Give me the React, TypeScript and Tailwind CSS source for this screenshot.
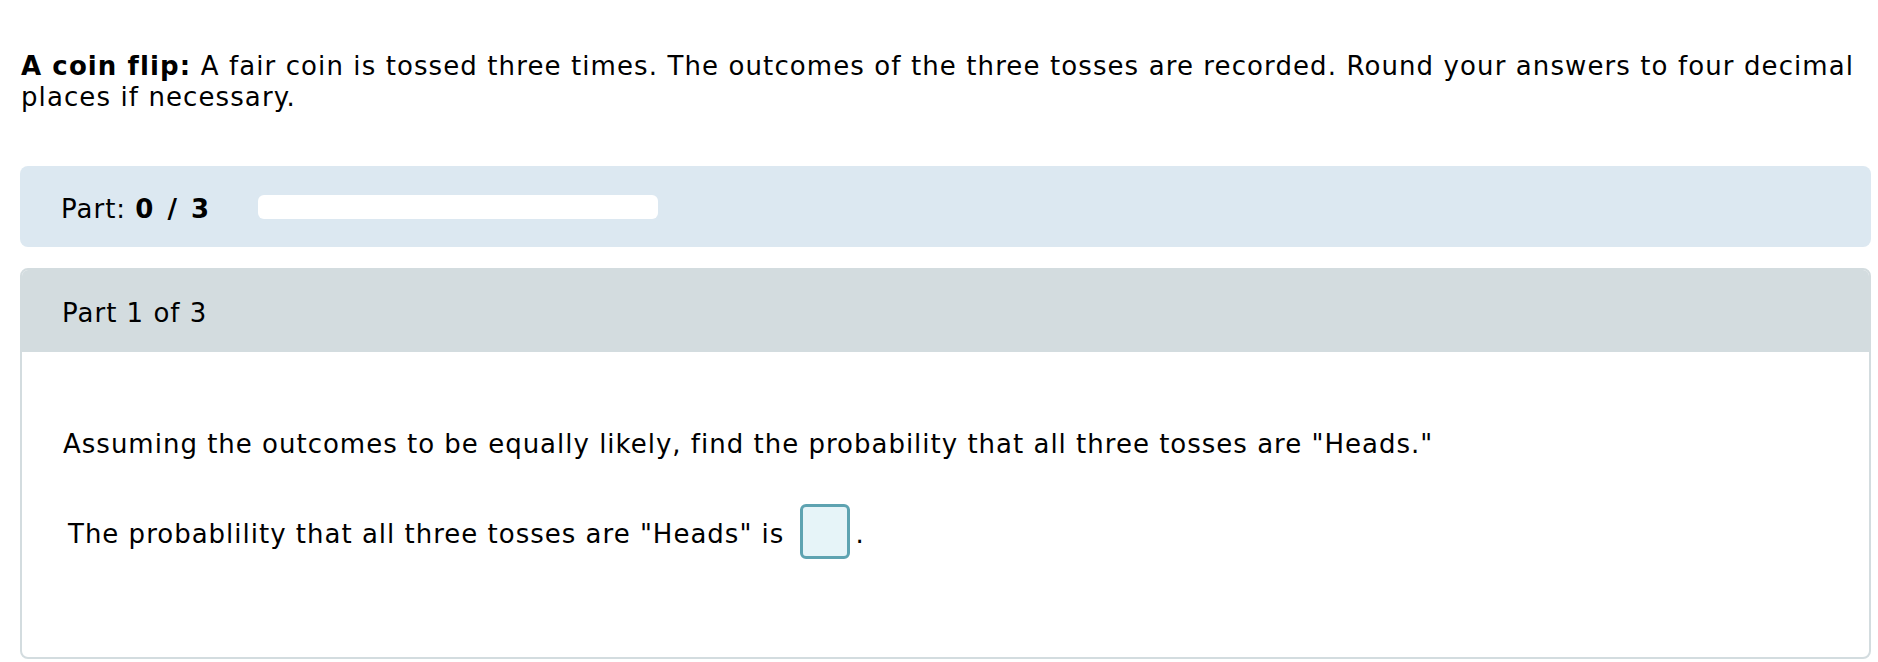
import React from "react";

export default function App() {
  return (
    <div
      className="w-[1878px] h-[662px] bg-white text-black overflow-hidden tracking-[1px]"
      style={{ fontFamily: '"DejaVu Sans", Verdana, sans-serif' }}
    >
      <div className="pl-[20px] w-[1871px]">
        <p className="pt-[51px] pl-[1px] text-[26px] leading-[31px] tracking-[1.1px]">
          <span className="font-bold">A coin flip:</span> A fair coin is tossed three times. The outcomes of the three
          tosses are recorded. Round your answers to four decimal places if necessary.
        </p>

        <div className="mt-[53px] h-[81px] rounded-[8px] bg-[#dce8f1] flex items-center pl-[41px]">
          <span className="text-[26px] leading-[31px] pt-[5px]">
            Part: <span className="font-bold tracking-[2.5px]">0 / 3</span>
          </span>
          <div className="ml-[46px] w-[400px] h-[24px] rounded-[6px] bg-white" />
        </div>

        <div className="mt-[21px] h-[391px] rounded-[8px] border-2 border-[#d3dcdf] overflow-hidden flex flex-col">
          <div className="h-[82px] bg-[#d3dcdf] flex items-center pl-[40px]">
            <span className="text-[26px] leading-[31px] pt-[4px]">Part 1 of 3</span>
          </div>
          <div className="pl-[41px] pt-[77px]">
            <p className="text-[26px] leading-[31px]">
              Assuming the outcomes to be equally likely, find the probability that all three tosses are "Heads."
            </p>
            <div className="mt-[44px] pl-[5px] flex items-center text-[26px] leading-[31px]">
              <span className="pt-[5px]">The probablility that all three tosses are "Heads" is</span>
              <span className="ml-[16px] inline-block w-[50px] h-[55px] rounded-[6px] border-[3px] border-[#5ea3b1] bg-[#e6f4f8]" />
              <span className="ml-[5px] pt-[5px]">.</span>
            </div>
          </div>
        </div>
      </div>
    </div>
  );
}
